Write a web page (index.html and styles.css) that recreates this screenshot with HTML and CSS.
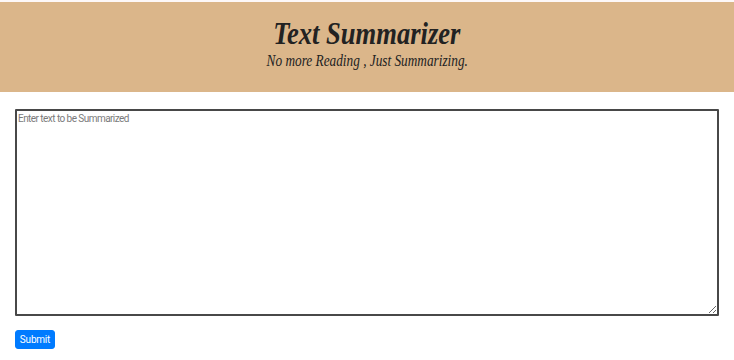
FILE: index.html
```html
<!DOCTYPE html>
<html>
<head>
<meta charset="utf-8">
<link rel="stylesheet" href="styles.css">
</head>
<body>
<header class="hero">
  <h1 class="title"><span class="narrow">Text Summarizer</span></h1>
  <p class="subtitle"><span class="narrow">No more Reading , Just Summarizing.</span></p>
</header>
<main class="content">
  <form class="form">
    <textarea class="input" placeholder="Enter text to be Summarized"></textarea>
    <button type="button" class="btn">Submit</button>
  </form>
</main>
</body>
</html>
```

FILE: styles.css
```css
html, body {
  margin: 0;
  padding: 0;
  background: #ffffff;
}
body {
  padding-top: 2px;
  background: #fdf8f8;
}
.hero {
  background: #dbb68a;
  height: 90px;
  box-sizing: border-box;
  padding-top: 14px;
  text-align: center;
  color: #222;
}
.narrow {
  display: inline-block;
  transform: scaleX(0.83);
  white-space: nowrap;
}
.title {
  margin: 0;
  font-family: "Liberation Serif", serif;
  font-style: italic;
  font-weight: bold;
  font-size: 32px;
  line-height: 34px;
}
.subtitle {
  margin: 2px 0 0;
  font-family: "Liberation Serif", serif;
  font-style: italic;
  font-size: 16px;
  line-height: 18px;
}
.content {
  background: #fff;
  padding: 17px 15px 10px;
}
.form {
  display: flex;
  flex-direction: column;
  align-items: flex-start;
  gap: 14px;
}
.input {
  box-sizing: border-box;
  width: 704px;
  height: 207px;
  margin: 0;
  border: 2px solid #484848;
  border-radius: 1px;
  padding: 0 1px;
  font-family: Roboto, sans-serif;
  font-size: 10px;
  letter-spacing: -0.55px;
  line-height: 16px;
  resize: vertical;
  outline: none;
}
.input::placeholder {
  color: #7a7a7a;
}
.btn {
  background: #007bff;
  color: #fff;
  border: 1px solid #007bff;
  border-radius: 3px;
  height: 19px;
  width: 40px;
  padding: 0;
  font-family: Roboto, sans-serif;
  font-size: 10px;
  letter-spacing: -0.2px;
}
```
